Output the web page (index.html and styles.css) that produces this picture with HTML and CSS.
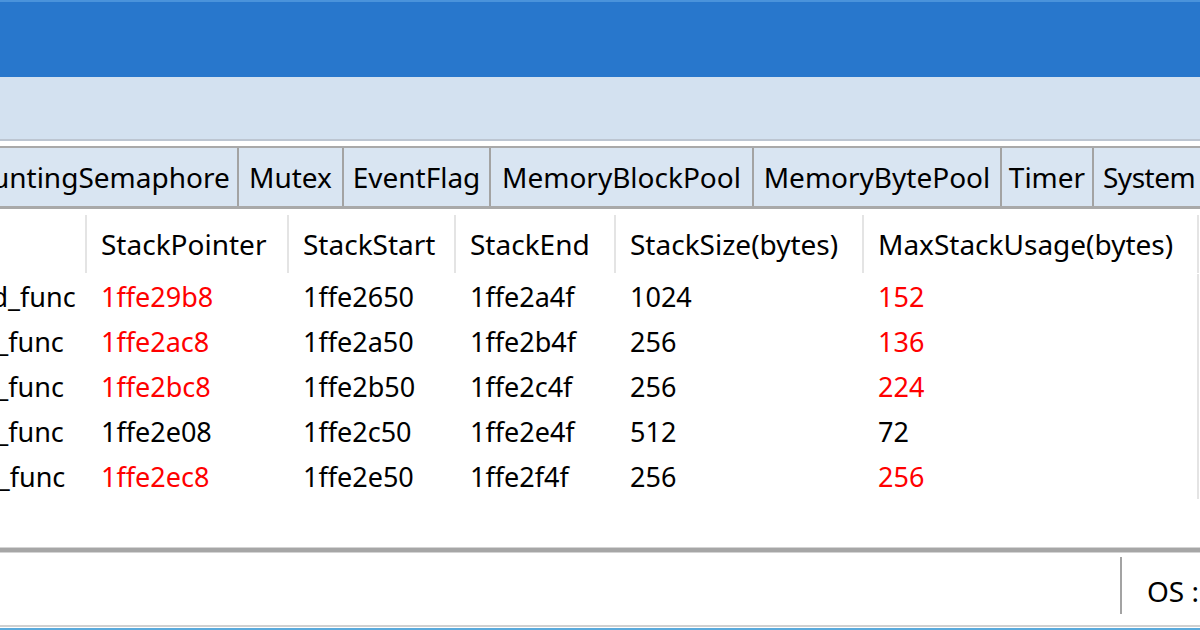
FILE: index.html
```html
<!DOCTYPE html>
<html lang="en">
<head>
    <meta charset="UTF-8">
    <meta name="viewport" content="width=device-width, initial-scale=1.0">
    <title>RTOS Viewer - Thread</title>
    <link rel="stylesheet" href="styles.css">
</head>
<body>
    <div class="window">
        <div class="titlebar"></div>
        <div class="toolbar"></div>

        <div class="tabs">
            <div class="tab">CountingSemaphore</div>
            <div class="tab">Mutex</div>
            <div class="tab">EventFlag</div>
            <div class="tab">MemoryBlockPool</div>
            <div class="tab">MemoryBytePool</div>
            <div class="tab">Timer</div>
            <div class="tab">System</div>
        </div>

        <div class="grid-view">
            <div class="grid">
                <div class="head">Name</div>
                <div class="head">StackPointer</div>
                <div class="head">StackStart</div>
                <div class="head">StackEnd</div>
                <div class="head">StackSize(bytes)</div>
                <div class="head last">MaxStackUsage(bytes)</div>

                <div class="cell">main_thread_func</div>
                <div class="cell warn">1ffe29b8</div>
                <div class="cell">1ffe2650</div>
                <div class="cell">1ffe2a4f</div>
                <div class="cell">1024</div>
                <div class="cell last warn">152</div>

                <div class="cell">main_adc_1_func</div>
                <div class="cell warn">1ffe2ac8</div>
                <div class="cell">1ffe2a50</div>
                <div class="cell">1ffe2b4f</div>
                <div class="cell">256</div>
                <div class="cell last warn">136</div>

                <div class="cell">main_can_2_func</div>
                <div class="cell warn">1ffe2bc8</div>
                <div class="cell">1ffe2b50</div>
                <div class="cell">1ffe2c4f</div>
                <div class="cell">256</div>
                <div class="cell last warn">224</div>

                <div class="cell">main_dac_3_func</div>
                <div class="cell">1ffe2e08</div>
                <div class="cell">1ffe2c50</div>
                <div class="cell">1ffe2e4f</div>
                <div class="cell">512</div>
                <div class="cell last">72</div>

                <div class="cell">main_usb_4_func</div>
                <div class="cell warn">1ffe2ec8</div>
                <div class="cell">1ffe2e50</div>
                <div class="cell">1ffe2f4f</div>
                <div class="cell">256</div>
                <div class="cell last warn">256</div>
            </div>
        </div>

        <div class="splitter"></div>

        <div class="statusbar">
            <div class="status-main"></div>
            <div class="status-os">OS :</div>
        </div>
        <div class="bottom-edge"></div>
    </div>
</body>
</html>
```

FILE: styles.css
```css
body {
    margin: 0;
    padding: 0;
    background: #fff;
    font-family: "Noto Sans", "Open Sans", sans-serif;
    font-size: 28px;
    color: #000;
}
.window {
    width: 1200px;
    height: 630px;
    overflow: hidden;
    display: flex;
    flex-direction: column;
}
.titlebar {
    height: 75px;
    background: #2877cc;
    border-top: 2px solid #4a93db;
    flex-shrink: 0;
}
.toolbar {
    height: 62px;
    background: #d3e1f0;
    border-bottom: 2px solid #bcc5d1;
    margin-bottom: 5px;
    flex-shrink: 0;
}

/* tab strip, scrolled so the first tab is cut off */
.tabs {
    display: grid;
    grid-template-columns: 289px 105px 147px 263px 248px 92px 160px;
    margin-left: -50px;
    height: 58px;
    background: #d9e5f2;
    border-top: 2px solid #a9a9a9;
    border-bottom: 3px solid #a9a9a9;
    flex-shrink: 0;
}
.tab {
    display: flex;
    align-items: center;
    justify-content: center;
    border-right: 2px solid #a3a3a3;
    white-space: nowrap;
}
.tab:last-child {
    justify-content: flex-start;
    padding-left: 9px;
    border-right: none;
    letter-spacing: -0.5px;
}

/* thread table, scrolled right past the name column */
.grid-view {
    height: 338px;
    overflow: hidden;
    flex-shrink: 0;
}
.grid {
    display: grid;
    grid-template-columns: 253px 202px 167px 160px 248px 335px;
    grid-auto-rows: 45px;
    grid-template-rows: 65px;
    margin-left: -166px;
}
.head,
.cell {
    box-sizing: border-box;
    padding-left: 14px;
    white-space: nowrap;
    overflow: hidden;
}
.head {
    margin-top: 6px;
    height: 58px;
    line-height: 58px;
    border-right: 2px solid #e4e4e4;
}
.cell {
    font-size: 27px;
    line-height: 45px;
}
.cell.last {
    border-right: 2px solid #e4e4e4;
}
.warn {
    color: #ff0000;
}

.splitter {
    height: 6px;
    background: linear-gradient(#d4d4d4 0, #d4d4d4 1px, #a6a6a6 1px, #a6a6a6 5px, #d4d4d4 5px);
    flex-shrink: 0;
}

.statusbar {
    height: 72px;
    display: flex;
    flex-shrink: 0;
}
.status-main {
    flex: 1;
}
.status-os {
    width: 53px;
    margin: 4px 0 11px;
    padding-left: 25px;
    padding-top: 12px;
    line-height: 45px;
    border-left: 2px solid #a3a3a3;
    white-space: nowrap;
}
.bottom-edge {
    height: 1px;
    border-top: 2px solid #d0d0d0;
    border-bottom: 2px solid #5aaadc;
    flex-shrink: 0;
}
```
